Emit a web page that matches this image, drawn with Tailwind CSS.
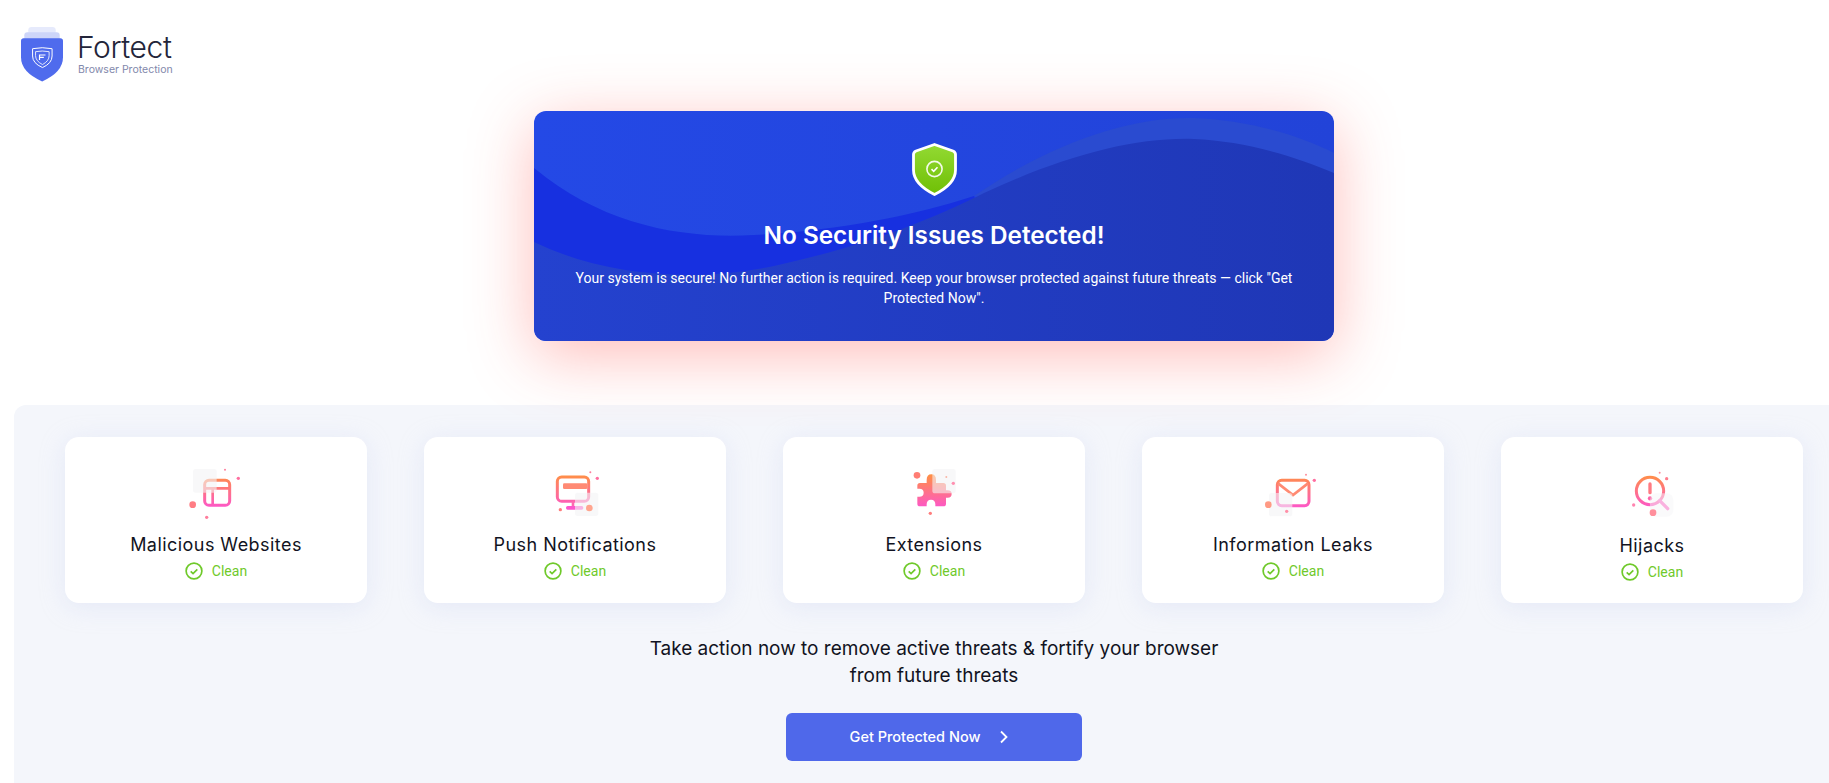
<!DOCTYPE html>
<html lang="en">
<head>
    <meta charset="UTF-8">
    <meta name="viewport" content="width=device-width, initial-scale=1.0">
    <title>Fortect Browser Protection</title>
    <script src="https://cdn.jsdelivr.net/npm/@tailwindcss/browser@4"></script>
</head>
<body class="bg-white font-['Roboto',sans-serif] h-[783px] overflow-hidden">

<!-- Gradients shared by the card icons -->
<svg width="0" height="0" class="absolute">
    <defs>
        <linearGradient id="iconGradUser" gradientUnits="userSpaceOnUse" x1="0" y1="45" x2="0" y2="145">
            <stop offset="0" stop-color="#ff8f45"/>
            <stop offset="1" stop-color="#fd55cc"/>
        </linearGradient>
    </defs>
</svg>

<!-- Logo -->
<header class="h-[111px] pt-[26px] pl-[21px] flex items-start gap-[14px]">
    <svg width="42" height="56" viewBox="63 78 127 168">
        <path d="M85 112V90q0-10 10-10h63q10 0 10 10v22z" fill="#e6eafc"/>
        <path d="M73 118V105q0-9 9-9h89q9 0 9 9v13z" fill="#cdd5f9"/>
        <path d="M63 122q0-8 8-8h111q8 0 8 8v50q0 45-63 73q-64-28-64-73z" fill="#4f6bed"/>
        <path d="M98 146q29-6 59 0v22q0 22-29 35q-30-13-30-35z" fill="none" stroke="#fff" stroke-width="3"/>
        <path d="M107 155q20-4 41 0v12q0 16-20 27q-21-11-21-27z" fill="none" stroke="#fff" stroke-width="2.500"/>
        <path d="M119 180v-15h18M119 172h13" fill="none" stroke="#fff" stroke-width="3.500"/>
    </svg>
    <div class="pt-[5px]">
        <div class="font-['Inter',sans-serif] font-light text-[30px] leading-[33px] text-[#23253a] tracking-[-0.4px]">Fortect</div>
        <div class="font-['Inter',sans-serif] text-[10.5px] leading-[12px] text-[#8288ab] pl-[1px]">Browser Protection</div>
    </div>
</header>

<!-- Status banner -->
<section class="relative w-[800px] h-[230px] ml-[534px] rounded-xl shadow-[0_14px_64px_rgba(255,70,60,0.36)] bg-linear-to-r from-[#2449e6] to-[#2243d8]">
    <svg class="absolute inset-0 rounded-xl" width="800" height="230" viewBox="0 0 800 230">
        <defs>
            <linearGradient id="heroDark" x1="0" y1="0" x2="1" y2="0">
                <stop offset="0" stop-color="#2442cf"/>
                <stop offset="1" stop-color="#1f37b6"/>
            </linearGradient>
        </defs>
        <path d="M0 57C70 115 150 128 220 124C300 120 380 105 440 85L480 180H0z" fill="#1730e0"/>
        <path d="M440 85C520 30 600 5 660 7C710 9 760 22 800 42V70L600 80z" fill="#2a4bd0"/>
        <path d="M0 131C70 165 160 172 240 155C330 135 390 112 450 82C530 45 600 26 660 28C710 30 760 45 800 62V218q0 12-12 12H12q-12 0-12-12z" fill="url(#heroDark)"/>
    </svg>
    <div class="relative flex flex-col items-center pt-[32px] px-[40px] text-white text-center">
        <svg width="45" height="53" viewBox="0 0 45 53">
            <defs>
                <linearGradient id="shieldGreen" x1="0" y1="0" x2="0" y2="1">
                    <stop offset="0" stop-color="#93da33"/>
                    <stop offset="1" stop-color="#6fbf05"/>
                </linearGradient>
            </defs>
            <path d="M22.500 1.500L41 8q2.500 1 2.500 3.500V27q0 14-21 24.500Q1.500 41 1.500 27V11.500Q1.500 9 4 8z" fill="url(#shieldGreen)" stroke="#fff" stroke-width="2.800" stroke-linejoin="round"/>
            <circle cx="22.500" cy="26" r="7.600" fill="none" stroke="#fff" stroke-opacity=".9" stroke-width="1.600"/>
            <path d="M19.500 26.200l2.200 2.100 3.800-4" fill="none" stroke="#fff" stroke-width="1.600"/>
        </svg>
        <h1 class="font-['Inter',sans-serif] font-semibold text-[24.3px] leading-[32px] mt-[23px]">No Security Issues Detected!</h1>
        <p class="text-[14px] leading-[20px] mt-[17px]">Your system is secure! No further action is required. Keep your browser protected against future threats — click "Get Protected Now".</p>
    </div>
</section>

<!-- Scan results -->
<main class="mt-[64px] ml-[14px] h-[378px] bg-[#f4f6fb] rounded-tl-xl pt-[32px] pl-[51px] pr-[26px]">
    <div class="grid grid-cols-5 gap-x-[57px]">

        <div class="h-[166px] bg-white rounded-[14px] shadow-[0_4px_24px_rgba(200,210,240,0.35)] flex flex-col items-center pt-[23px]">
            <svg width="90" height="70" viewBox="0 0 270 210">
                <rect x="101" y="61" width="75" height="75" rx="13" fill="none" stroke="url(#iconGradUser)" stroke-width="9"/>
                <path d="M101 85h75M125 85v50" fill="none" stroke="url(#iconGradUser)" stroke-width="8"/>
                <rect x="66" y="27" width="71" height="71" rx="8" fill="#f4f4f5" fill-opacity=".6"/>
                <circle cx="65" cy="134" r="10" fill="#ff7d84"/>
                <circle cx="107" cy="172" r="5" fill="#ff7d9c"/>
                <circle cx="202" cy="55" r="5" fill="#ff6fa0"/>
                <circle cx="162" cy="29" r="3" fill="#ff7d9c"/>
            </svg>
            <h3 class="font-['Inter',sans-serif] font-normal text-[18px] leading-[24px] tracking-[0.45px] text-[#111322] mt-[3px]">Malicious Websites</h3>
            <div class="flex items-center gap-[9px] mt-[4px] text-[14px] leading-[20px] text-[#6fc92a]">
                <svg width="18" height="18" viewBox="0 0 19 19"><circle cx="9.500" cy="9.500" r="8.300" fill="none" stroke="#6fc92a" stroke-width="1.800"/><path d="M6 9.800l2.500 2.400 4.500-4.500" fill="none" stroke="#6fc92a" stroke-width="1.800"/></svg>
                Clean
            </div>
        </div>

        <div class="h-[166px] bg-white rounded-[14px] shadow-[0_4px_24px_rgba(200,210,240,0.35)] flex flex-col items-center pt-[23px]">
            <svg width="90" height="70" viewBox="0 0 270 210">
                <rect x="82" y="51" width="94" height="73" rx="13" fill="none" stroke="url(#iconGradUser)" stroke-width="9"/>
                <rect x="99" y="70" width="73" height="17" rx="4" fill="#ff8a74"/>
                <path d="M129 124v20" stroke="#fd6ab0" stroke-width="8"/>
                <rect x="108" y="138" width="52" height="11" rx="5" fill="#fd55cc"/>
                <rect x="135" y="98" width="70" height="70" rx="8" fill="#f4f4f5" fill-opacity=".6"/>
                <circle cx="178" cy="144" r="10" fill="#ffa58f"/>
                <circle cx="91" cy="149" r="5" fill="#ff7d7d"/>
                <circle cx="202" cy="55" r="5" fill="#ff6fa0"/>
                <circle cx="181" cy="37" r="3" fill="#ff7d9c"/>
            </svg>
            <h3 class="font-['Inter',sans-serif] font-normal text-[18px] leading-[24px] tracking-[0.45px] text-[#111322] mt-[3px]">Push Notifications</h3>
            <div class="flex items-center gap-[9px] mt-[4px] text-[14px] leading-[20px] text-[#6fc92a]">
                <svg width="18" height="18" viewBox="0 0 19 19"><circle cx="9.500" cy="9.500" r="8.300" fill="none" stroke="#6fc92a" stroke-width="1.800"/><path d="M6 9.800l2.500 2.400 4.500-4.500" fill="none" stroke="#6fc92a" stroke-width="1.800"/></svg>
                Clean
            </div>
        </div>

        <div class="h-[166px] bg-white rounded-[14px] shadow-[0_4px_24px_rgba(200,210,240,0.35)] flex flex-col items-center pt-[23px]">
            <svg width="90" height="70" viewBox="-3 0 270 210">
                <path d="M110 60q0-17 14-17t14 17v9h22q8 0 8 8v14h5q12 0 12 11t-12 11h-5v18q0 8-8 8h-24v-6q0-14-13-14t-13 14v6H90q-8 0-8-8v-21h6q13 0 13-12t-13-12h-6V77q0-8 8-8h20z" fill="url(#iconGradUser)"/>
                <rect x="127" y="27" width="70" height="73" rx="8" fill="#f4f4f5" fill-opacity=".6"/>
                <circle cx="81" cy="46" r="10" fill="#ff7d74"/>
                <circle cx="121" cy="160" r="5" fill="#ff7d7d"/>
                <circle cx="190" cy="70" r="5" fill="#ff8fb0"/>
                <circle cx="169" cy="51" r="3" fill="#f9b5a5"/>
            </svg>
            <h3 class="font-['Inter',sans-serif] font-normal text-[18px] leading-[24px] tracking-[0.45px] text-[#111322] mt-[3px]">Extensions</h3>
            <div class="flex items-center gap-[9px] mt-[4px] text-[14px] leading-[20px] text-[#6fc92a]">
                <svg width="18" height="18" viewBox="0 0 19 19"><circle cx="9.500" cy="9.500" r="8.300" fill="none" stroke="#6fc92a" stroke-width="1.800"/><path d="M6 9.800l2.500 2.400 4.500-4.500" fill="none" stroke="#6fc92a" stroke-width="1.800"/></svg>
                Clean
            </div>
        </div>

        <div class="h-[166px] bg-white rounded-[14px] shadow-[0_4px_24px_rgba(200,210,240,0.35)] flex flex-col items-center pt-[23px]">
            <svg width="90" height="70" viewBox="-6 0 270 210">
                <rect x="82" y="61" width="95" height="76" rx="13" fill="none" stroke="url(#iconGradUser)" stroke-width="9"/>
                <path d="M84 70l45 35 45-35" fill="none" stroke="#ff8a72" stroke-width="8"/>
                <rect x="57" y="99" width="70" height="70" rx="8" fill="#f4f4f5" fill-opacity=".6"/>
                <circle cx="55" cy="134" r="10" fill="#ff9a84"/>
                <circle cx="110" cy="154" r="5" fill="#ff8fa8"/>
                <circle cx="193" cy="61" r="5" fill="#ff6fa0"/>
                <circle cx="168" cy="44" r="3" fill="#ff8f9c"/>
            </svg>
            <h3 class="font-['Inter',sans-serif] font-normal text-[18px] leading-[24px] tracking-[0.45px] text-[#111322] mt-[3px]">Information Leaks</h3>
            <div class="flex items-center gap-[9px] mt-[4px] text-[14px] leading-[20px] text-[#6fc92a]">
                <svg width="18" height="18" viewBox="0 0 19 19"><circle cx="9.500" cy="9.500" r="8.300" fill="none" stroke="#6fc92a" stroke-width="1.800"/><path d="M6 9.800l2.500 2.400 4.500-4.500" fill="none" stroke="#6fc92a" stroke-width="1.800"/></svg>
                Clean
            </div>
        </div>

        <div class="h-[166px] bg-white rounded-[14px] shadow-[0_4px_24px_rgba(200,210,240,0.35)] flex flex-col items-center pt-[23px]">
            <svg width="90" height="70" viewBox="-9 0 270 210">
                <circle cx="120" cy="93" r="41" fill="none" stroke="url(#iconGradUser)" stroke-width="9"/>
                <path d="M149 122l24 24" stroke="#fd6cc6" stroke-width="10" stroke-linecap="round"/>
                <path d="M120 72v26" stroke="#ff7a82" stroke-width="10" stroke-linecap="round"/>
                <circle cx="120" cy="115" r="6.500" fill="#fd64a8"/>
                <rect x="120" y="100" width="70" height="70" rx="20" fill="#f6f6f7" fill-opacity=".5"/>
                <circle cx="129" cy="158" r="10" fill="#ff8f9c"/>
                <circle cx="71" cy="135" r="5" fill="#ff85b0"/>
                <circle cx="170" cy="56" r="5" fill="#ff7d8c"/>
                <circle cx="149" cy="38" r="3" fill="#ff8f9c"/>
            </svg>
            <h3 class="font-['Inter',sans-serif] font-normal text-[18px] leading-[24px] tracking-[0.45px] text-[#111322] mt-[4px]">Hijacks</h3>
            <div class="flex items-center gap-[9px] mt-[4px] text-[14px] leading-[20px] text-[#6fc92a]">
                <svg width="18" height="18" viewBox="0 0 19 19"><circle cx="9.500" cy="9.500" r="8.300" fill="none" stroke="#6fc92a" stroke-width="1.800"/><path d="M6 9.800l2.500 2.400 4.500-4.500" fill="none" stroke="#6fc92a" stroke-width="1.800"/></svg>
                Clean
            </div>
        </div>
    </div>

    <!-- Call to action -->
    <div class="w-[800px] ml-[469px] flex flex-col items-center mt-[32px]">
        <p class="w-[600px] font-['Inter',sans-serif] text-[19px] leading-[27px] text-center text-[#111322]">Take action now to remove active threats &amp; fortify your browser<br>from future threats</p>
        <a href="#" class="w-[296px] h-[48px] mt-[24px] bg-[#4f68ea] rounded-[6px] text-white font-['Inter',sans-serif] font-medium text-[14.5px] flex items-center justify-center gap-[19px] pr-[9px]">
            Get Protected Now
            <svg width="10" height="14" viewBox="0 0 10 14"><path d="M2 1.500l5.500 5.500-5.500 5.500" fill="none" stroke="#fff" stroke-width="1.800"/></svg>
        </a>
    </div>
</main>

</body>
</html>
